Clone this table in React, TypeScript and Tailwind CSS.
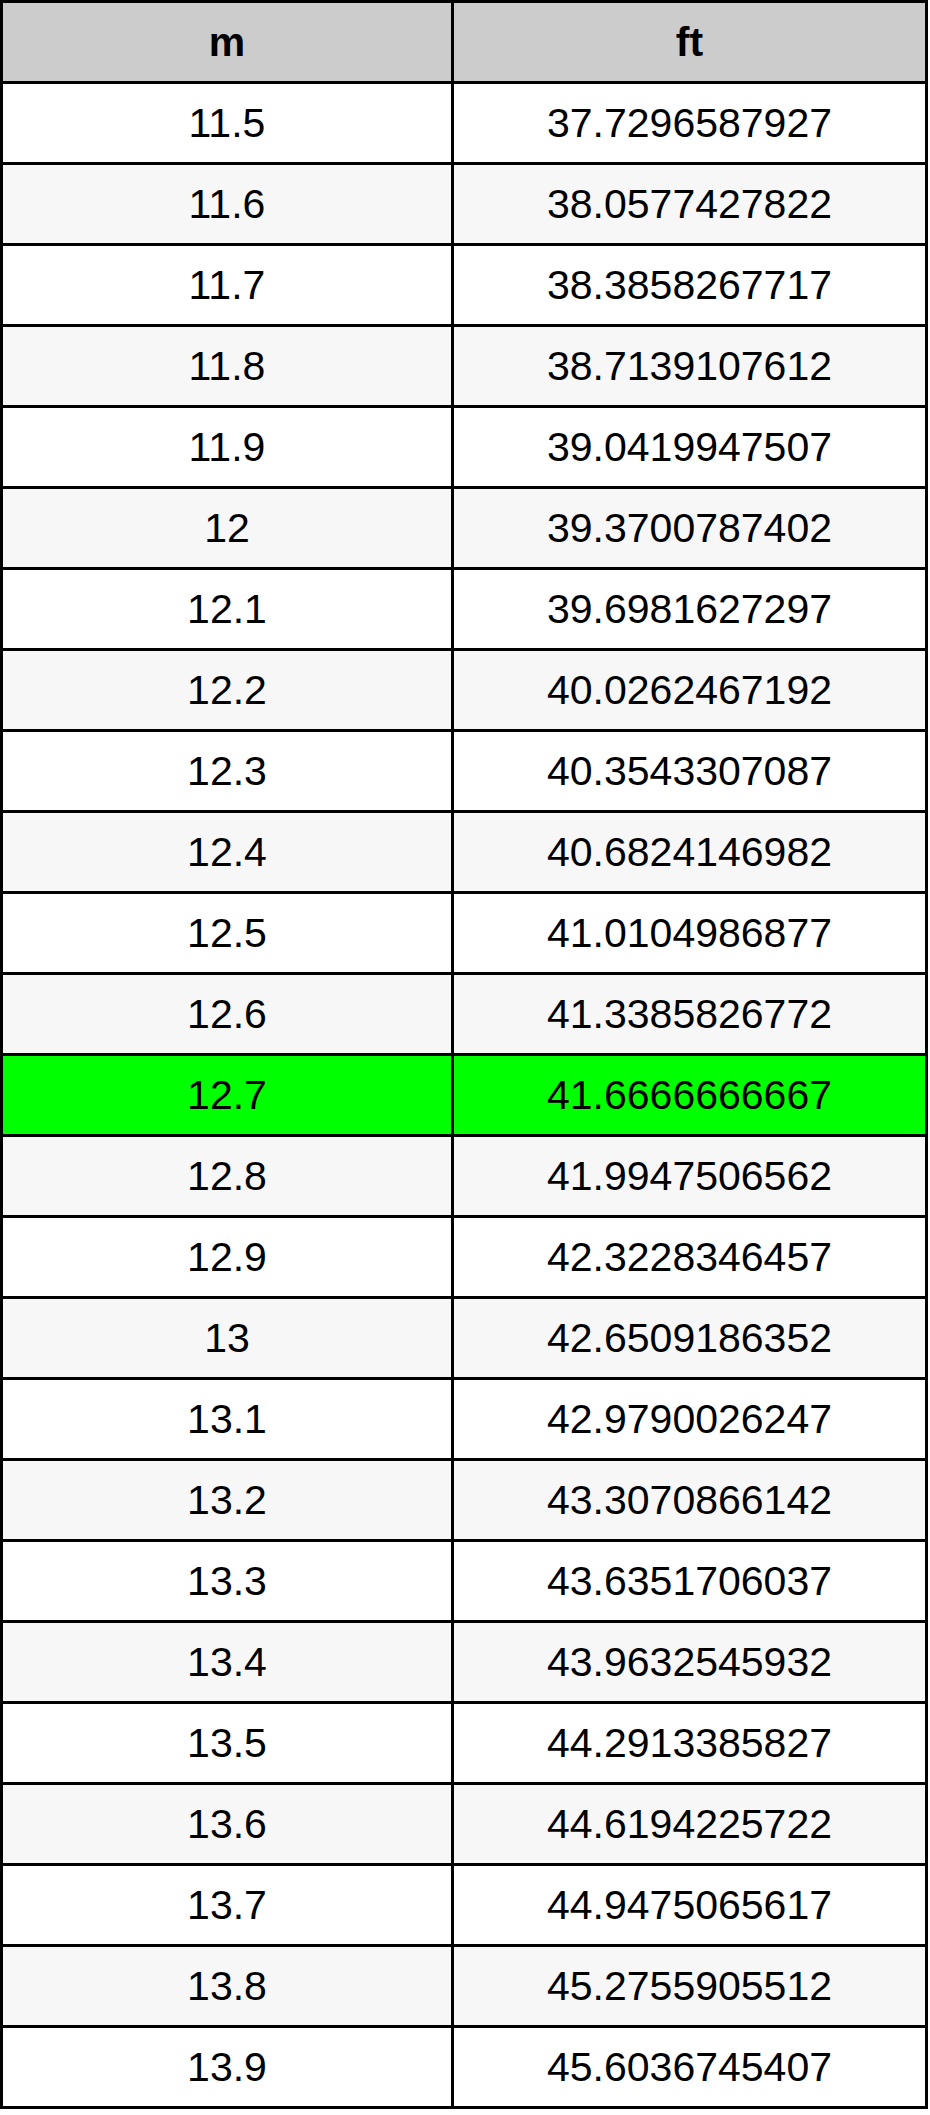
const rows: [string, string][] = [
  ['11.5', '37.7296587927'],
  ['11.6', '38.0577427822'],
  ['11.7', '38.3858267717'],
  ['11.8', '38.7139107612'],
  ['11.9', '39.0419947507'],
  ['12', '39.3700787402'],
  ['12.1', '39.6981627297'],
  ['12.2', '40.0262467192'],
  ['12.3', '40.3543307087'],
  ['12.4', '40.6824146982'],
  ['12.5', '41.0104986877'],
  ['12.6', '41.3385826772'],
  ['12.7', '41.6666666667'],
  ['12.8', '41.9947506562'],
  ['12.9', '42.3228346457'],
  ['13', '42.6509186352'],
  ['13.1', '42.9790026247'],
  ['13.2', '43.3070866142'],
  ['13.3', '43.6351706037'],
  ['13.4', '43.9632545932'],
  ['13.5', '44.2913385827'],
  ['13.6', '44.6194225722'],
  ['13.7', '44.9475065617'],
  ['13.8', '45.2755905512'],
  ['13.9', '45.6036745407'],
];

// highlighted row is the exact match
const highlight = '12.7';

const cell = 'h-[81px] flex items-center justify-center border-r-[3px] border-b-[3px] border-black';

export default function App() {
  return (
    <div className="w-[928px] bg-white font-['Liberation_Sans',Arial,sans-serif] text-[41px] leading-none text-black">
      <div className="grid grid-cols-[451px_474px] border-l-[3px] border-t-[3px] border-black">
        <div className={`${cell} bg-[#cccccc] font-bold`}>m</div>
        <div className={`${cell} bg-[#cccccc] font-bold`}>ft</div>
        {rows.map(([m, ft], i) => {
          const bg = m === highlight ? 'bg-[#00ff00]' : i % 2 === 0 ? 'bg-white' : 'bg-[#f7f7f7]';
          return [
            <div key={m + '-m'} className={`${cell} ${bg}`}>{m}</div>,
            <div key={m + '-ft'} className={`${cell} ${bg}`}>{ft}</div>,
          ];
        })}
      </div>
    </div>
  );
}
